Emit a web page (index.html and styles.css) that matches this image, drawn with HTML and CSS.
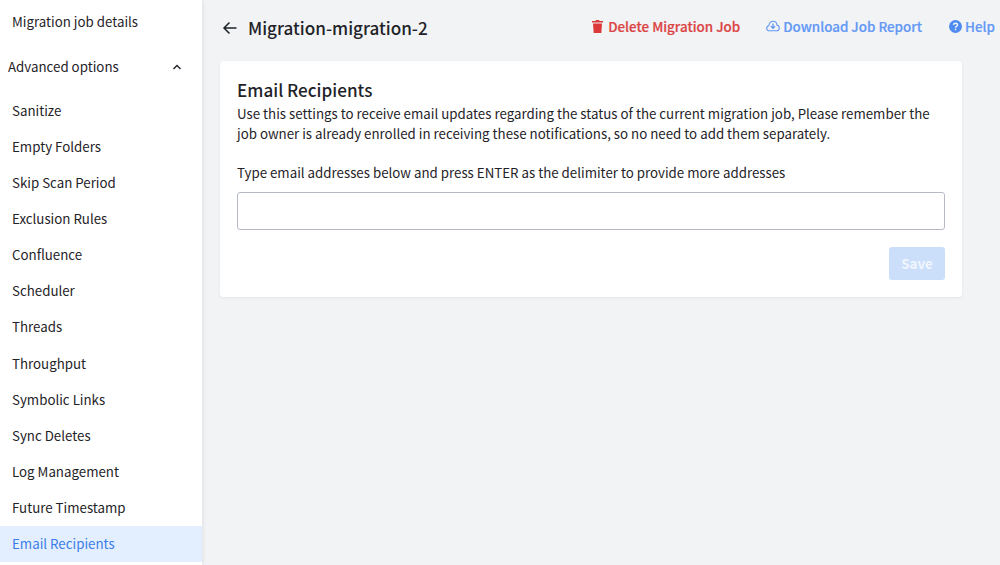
FILE: index.html
```html
<!DOCTYPE html>
<html lang="en">
<head>
    <meta charset="UTF-8">
    <meta name="viewport" content="width=device-width, initial-scale=1.0">
    <title>Migration-migration-2</title>
    <link rel="stylesheet" href="styles.css">
</head>
<body>
    <div class="sidebar">
        <div class="nav-item">Migration job details</div>
        <div class="nav-group">
            <span>Advanced options</span>
            <svg class="chevron" width="10" height="6" viewBox="0 0 10 6"><path d="M1.5 5 L5 1.5 L8.5 5" fill="none" stroke="#1f2328" stroke-width="1.4"/></svg>
        </div>
        <div class="nav-item">Sanitize</div>
        <div class="nav-item">Empty Folders</div>
        <div class="nav-item">Skip Scan Period</div>
        <div class="nav-item">Exclusion Rules</div>
        <div class="nav-item">Confluence</div>
        <div class="nav-item">Scheduler</div>
        <div class="nav-item">Threads</div>
        <div class="nav-item">Throughput</div>
        <div class="nav-item">Symbolic Links</div>
        <div class="nav-item">Sync Deletes</div>
        <div class="nav-item">Log Management</div>
        <div class="nav-item">Future Timestamp</div>
        <div class="nav-item active">Email Recipients</div>
    </div>
    <div class="main">
        <div class="topbar">
            <svg class="back" width="16" height="14" viewBox="0 0 16 14"><path d="M14.5 7 H2 M7.5 1.5 L2 7 L7.5 12.5" fill="none" stroke="#1f2328" stroke-width="1.5"/></svg>
            <div class="page-title">Migration-migration-2</div>
            <div class="actions">
                <div class="action danger">
                    <svg width="11" height="13" viewBox="0 0 11 13"><path d="M4 0 H7 L7.6 1 H11 V2.6 H0 V1 H3.4 Z M1 3.4 H10 L9.3 13 H1.7 Z" fill="#dc3838"/></svg>
                    Delete Migration Job
                </div>
                <div class="action link tight">
                    <svg width="14" height="12" viewBox="0 0 14 12"><path d="M3.6 10.8 C1.8 10.8 .7 9.6 .7 8.2 C.7 6.9 1.7 5.9 2.9 5.7 C3.2 3.2 5 1.2 7.2 1.2 C9.3 1.2 10.8 3 11 5.1 C12.4 5.4 13.3 6.6 13.3 8 C13.3 9.6 12.1 10.8 10.6 10.8 Z" fill="none" stroke="#6398f5" stroke-width="1.1"/><path d="M7 3.6 V8 M5 6.2 L7 8.4 L9 6.2" fill="none" stroke="#6398f5" stroke-width="1.3"/></svg>
                    Download Job Report
                </div>
                <div class="action link tight">
                    <svg width="13" height="13" viewBox="0 0 13 13"><circle cx="6.5" cy="6.5" r="6.5" fill="#4f8bf0"/><path d="M4.5 5 C4.6 3.8 5.4 3.2 6.5 3.2 C7.7 3.2 8.5 3.9 8.5 4.9 C8.5 6.2 6.6 6.2 6.6 7.7" fill="none" stroke="#f1f3f5" stroke-width="1.4"/><rect x="5.8" y="8.7" width="1.5" height="1.5" fill="#f1f3f5"/></svg>
                    Help
                </div>
            </div>
        </div>
        <div class="card">
            <h2 class="card-title">Email Recipients</h2>
            <p class="card-text">Use this settings to receive email updates regarding the status of the current migration job, Please remember the job owner is already enrolled in receiving these notifications, so no need to add them separately.</p>
            <label class="field-label" for="emails">Type email addresses below and press ENTER as the delimiter to provide more addresses</label>
            <input class="field" id="emails" type="text">
            <div class="card-footer">
                <button class="save" disabled>Save</button>
            </div>
        </div>
    </div>
</body>
</html>
```

FILE: styles.css
```css
html, body {
    height: 100%;
}
body {
    margin: 0;
    display: flex;
    overflow: hidden;
    font-family: "Noto Sans CJK SC", "Noto Sans", sans-serif;
    font-size: 13.3px;
    color: #1f2328;
    background-color: #f1f3f5;
}
.sidebar {
    width: 202px;
    flex-shrink: 0;
    padding-top: 4px;
    background-color: #fff;
    box-shadow: 1px 0 4px rgba(0, 0, 0, 0.08);
}
.nav-item {
    height: 36.07px;
    line-height: 36px;
    padding-left: 12px;
}
.nav-item.active {
    color: #3b7de8;
    background-color: #e3effe;
}
.nav-group {
    display: flex;
    align-items: center;
    justify-content: space-between;
    height: 53px;
    padding: 0 20px 0 8px;
}
.main {
    flex: 1;
    padding: 0 38px 0 18px;
}
.topbar {
    display: flex;
    align-items: center;
    height: 55px;
    margin-bottom: 6px;
}
.back {
    margin-left: 2px;
    margin-right: 10px;
}
.page-title {
    font-size: 17.1px;
    font-weight: 500;
}
.actions {
    display: flex;
    align-items: center;
    gap: 27px;
    margin-left: auto;
    margin-right: -33px;
    font-size: 13.4px;
    white-space: nowrap;
}
.action {
    display: flex;
    align-items: center;
    gap: 5px;
    margin-top: -3px;
    font-weight: 500;
    -webkit-text-stroke: 0.2px currentColor;
}
.action.tight {
    gap: 3px;
}
.danger {
    margin-right: -1px;
    color: #dc4444;
}
.link {
    color: #6398f5;
}
.card {
    padding: 15px 17px 17px;
    border-radius: 4px;
    background-color: #fff;
    box-shadow: 0 1px 3px rgba(0, 0, 0, 0.06);
}
.card-title {
    margin: 0 0 1px;
    font-size: 17.1px;
    font-weight: 500;
    line-height: 27px;
}
.card-text {
    margin: 0 0 19px;
    line-height: 20px;
}
.field-label {
    display: block;
    line-height: 20px;
}
.field {
    display: block;
    box-sizing: border-box;
    width: 100%;
    height: 38px;
    margin-top: 8.5px;
    border: 1px solid #b5bac6;
    border-radius: 3px;
    background-color: #fff;
}
.card-footer {
    display: flex;
    justify-content: flex-end;
    margin-top: 17.5px;
}
.save {
    width: 56px;
    height: 33px;
    border: none;
    border-radius: 3px;
    font-family: inherit;
    font-size: 13.3px;
    font-weight: 700;
    color: #f1f6fe;
    background-color: #cbdffb;
}
```
